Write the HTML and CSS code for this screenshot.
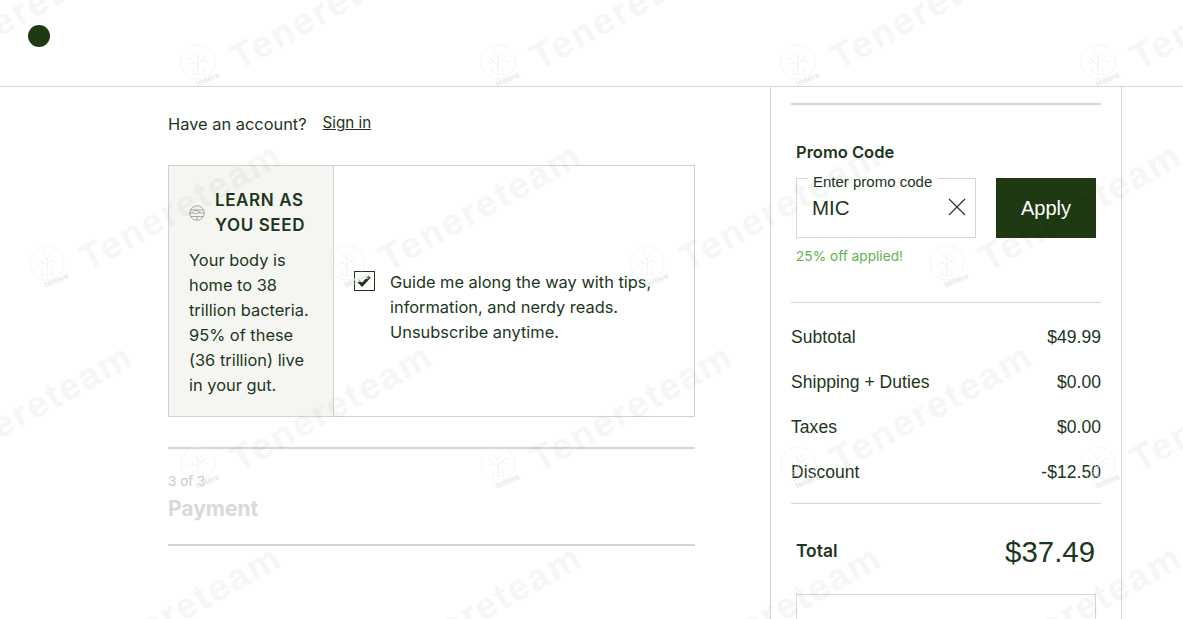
FILE: index.html
```html
<!DOCTYPE html>
<html lang="en">
<head>
<meta charset="utf-8">
<title>Checkout</title>
<link rel="stylesheet" href="styles.css">
</head>
<body>
<header class="topbar"><span class="brand-dot"></span></header>
<div class="page">
  <main class="checkout">
    <p class="account"><span>Have an account?</span><a href="#">Sign in</a></p>
    <section class="learn">
      <aside class="learn-side">
        <div class="learn-head">
          <svg class="learn-icon" viewBox="0 0 16 16" fill="none" stroke="#8c948a" stroke-width=".8"><circle cx="8" cy="8" r="7.3"/><path d="M1.5 5h13M1 8.5c3-2 5 1 7 0s4-1 7 0M2 11.5h12M6 5c2 1 4 1 5 3M8 11.5v3.5"/></svg>
          <h2>LEARN AS YOU SEED</h2>
        </div>
        <p>Your body is home to 38 trillion bacteria. 95% of these (36 trillion) live in your gut.</p>
      </aside>
      <label class="learn-opt">
        <span class="check"><svg viewBox="0 0 16 16" fill="none" stroke="#20361a" stroke-width="3"><path d="M2.5 8.2l3.6 3.6L13.5 3.8"/></svg></span>
        <span>Guide me along the way with tips, information, and nerdy reads. Unsubscribe anytime.</span>
      </label>
    </section>
    <section class="step">
      <div class="step-num">3 of 3</div>
      <div class="step-title">Payment</div>
    </section>
  </main>
  <aside class="summary">
    <div class="summary-top"></div>
    <h3 class="promo-title">Promo Code</h3>
    <div class="promo-row">
      <div class="promo-field">
        <span class="promo-label">Enter promo code</span>
        <span class="promo-val">MIC</span>
        <svg class="promo-x" viewBox="0 0 18 18" fill="none" stroke="#20361a" stroke-width="1.1"><path d="M1 1l16 16M17 1L1 17"/></svg>
      </div>
      <button class="apply">Apply</button>
    </div>
    <p class="promo-ok">25% off applied!</p>
    <div class="lines">
      <div class="line"><span>Subtotal</span><span>$49.99</span></div>
      <div class="line"><span>Shipping + Duties</span><span>$0.00</span></div>
      <div class="line"><span>Taxes</span><span>$0.00</span></div>
      <div class="line"><span>Discount</span><span>-$12.50</span></div>
    </div>
    <div class="total"><span class="total-label">Total</span><span class="total-val">$37.49</span></div>
    <div class="pay-box"></div>
  </aside>
</div>
<div class="marks" aria-hidden="true" id="marks"></div>
<script src="marks.js"></script>
</body>
</html>
```
FILE: marks.js
```js
var tile = '<div class="tile"><svg class="seal" viewBox="0 0 44 50" fill="none" stroke="#e9e9e9" stroke-width=".8"><circle cx="18" cy="18" r="17" stroke-dasharray="1.5 1"/><path stroke-dasharray="2 1" d="M18 31V14M18 22l-8-8M18 20l8-9M14 18L8 20M22 16l7 2M18 14l-4-6M18 14l4-6M13 31V24M23 31V24"/><text x="15" y="39" transform="rotate(-22 25 36)">tenere</text></svg><span class="word">Tenereteam</span></div>';
var html = '';
for (var r = 0; r < 4; r++) {
  var n = r % 2 ? 4 : 5;
  var cells = '';
  for (var c = 0; c < n; c++) cells += tile;
  html += '<div class="mark-row' + (r % 2 ? ' alt' : '') + '">' + cells + '</div>';
}
document.getElementById('marks').innerHTML = html;
```
FILE: styles.css
```css
* { box-sizing: border-box; }
html, body { height: 619px; overflow: hidden; }
body {
  margin: 0;
  position: relative;
  background: #fff;
  color: #20361a;
  font-family: "Inter", "Liberation Sans", sans-serif;
  font-size: 16.4px;
}
p, h2, h3 { margin: 0; }

.topbar {
  height: 87px;
  border-bottom: 1px solid #d6d6d6;
  padding: 25px 0 0 28px;
}
.brand-dot {
  display: block;
  width: 22px;
  height: 22px;
  border-radius: 50%;
  background: #1f3a12;
}

.page { display: flex; height: 532px; }
.checkout { width: 770px; padding: 26px 0 0 168px; }

.account { display: flex; gap: 16px; height: 52px; line-height: 22px; }
.account a { color: #20361a; font-size: 15.2px; text-decoration: underline; line-height: 20px; }

.learn {
  display: flex;
  width: 527px;
  height: 252px;
  border: 1px solid #d2d2d2;
}
.learn-side {
  flex: none;
  width: 165px;
  padding: 22px 15px 0 20px;
  background: #f5f6f1;
  border-right: 1px solid #d2d2d2;
  line-height: 25px;
}
.learn-head { display: flex; align-items: center; gap: 10px; margin-bottom: 10px; }
.learn-icon { width: 16px; height: 16px; flex: none; }
.learn-head h2 { font-size: 17px; font-weight: 600; line-height: 25px; letter-spacing: .6px; }
.learn-opt {
  flex: 1;
  display: flex;
  gap: 15px;
  padding: 104px 30px 0 20px;
  line-height: 25px;
}
.check {
  flex: none;
  margin-top: 1px;
  width: 21px;
  height: 20px;
  border: 1.5px solid #20361a;
  display: flex;
  padding: 1px;
}

.step {
  width: 527px;
  height: 99px;
  margin-top: 30px;
  border-top: 2px solid #d5d5d5;
  border-bottom: 2px solid #d5d5d5;
  padding-top: 24px;
  color: #d8dad6;
}
.step-num { font-size: 13.5px; line-height: 16px; color: #c6c8c4; }
.step-title { margin-top: 7px; font-size: 21px; line-height: 26px; font-weight: 700; }

.summary {
  width: 352px;
  border: 1px solid #d6d6d6;
  border-width: 0 1px;
  padding: 16px 20px 0;
  font-family: "Liberation Sans", sans-serif;
}
.summary-top { height: 2px; background: #d5d5d5; }
.promo-title {
  margin: 36px 0 0 5px;
  font-family: "Inter", sans-serif;
  font-size: 16.5px;
  font-weight: 600;
  line-height: 22px;
}
.promo-row { display: flex; gap: 20px; margin: 15px 0 0 5px; }
.promo-field {
  position: relative;
  width: 180px;
  height: 60px;
  padding: 15px 15px 0;
  border: 1px solid #d6d6d6;
}
.promo-label {
  position: absolute;
  left: 11px;
  top: -5px;
  padding: 0 6px 0 5px;
  background: #fff;
  font-size: 15px;
  line-height: 16px;
  white-space: nowrap;
}
.promo-val { display: block; font-size: 20.5px; line-height: 28px; }
.promo-x { position: absolute; right: 9px; top: 19px; width: 18px; height: 18px; }
.apply {
  width: 100px;
  height: 60px;
  border: 0;
  background: #1f3a12;
  color: #fff;
  font-family: "Liberation Sans", sans-serif;
  font-size: 20px;
}
.promo-ok { margin: 9px 0 0 5px; font-family: "Inter", sans-serif; font-size: 13.7px; line-height: 18px; color: #62b34a; }

.lines {
  margin-top: 37px;
  padding-top: 12px;
  border-top: 1px solid #d6d6d6;
  border-bottom: 1px solid #d6d6d6;
  height: 202px;
}
.line {
  display: flex;
  justify-content: space-between;
  height: 45px;
  line-height: 45px;
  font-size: 17.5px;
  letter-spacing: .05px;
}
.total {
  display: flex;
  justify-content: space-between;
  align-items: center;
  padding: 6px 5px 0;
  height: 90px;
}
.total-label { font-family: "Inter", sans-serif; font-weight: 600; font-size: 17.4px; margin-bottom: 3px; }
.total-val { font-size: 29.4px; margin-right: 1px; }
.pay-box { margin: 0 5px; height: 60px; border: 1px solid #d6d6d6; }

.marks {
  position: absolute;
  top: -38px;
  left: 0;
  width: 1183px;
  height: 657px;
  pointer-events: none;
  overflow: hidden;
}
.mark-row { display: flex; height: 201px; margin-left: -152px; }
.mark-row.alt { margin-left: -3px; }
.tile { flex: none; position: relative; width: 300px; height: 201px; }
.seal { position: absolute; left: 32px; top: 82px; width: 44px; height: 50px; }
.seal text { font-family: "Liberation Sans", sans-serif; font-size: 8.5px; font-weight: 700; fill: #e8e8e8; stroke: none; }
.word {
  position: absolute;
  left: 95px;
  top: 76px;
  font-family: "Liberation Sans", sans-serif;
  font-size: 37px;
  font-weight: 700;
  letter-spacing: 2px;
  line-height: 40px;
  color: #000;
  opacity: .033;
  transform: rotate(-29deg);
  transform-origin: left bottom;
  white-space: nowrap;
}
```
